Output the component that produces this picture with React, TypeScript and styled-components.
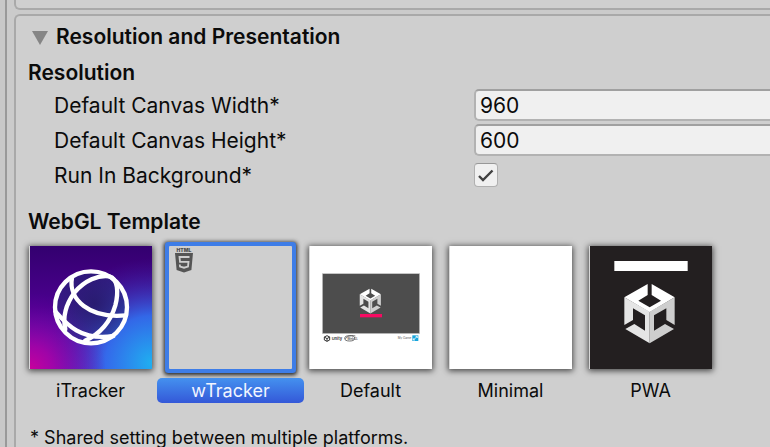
import React, { useState } from "react";
import styled, { createGlobalStyle } from "styled-components";

const GlobalStyle = createGlobalStyle`
  * { box-sizing: border-box; }
  body {
    margin: 0;
    background: #c8c8c8;
    color: #0b0b0b;
    font-family: Inter, "Liberation Sans", sans-serif;
    font-optical-sizing: none;
    overflow: hidden;
  }
  button, input { font: inherit; color: inherit; }
`;

const Window = styled.div`
  min-height: 100vh;
  padding-left: 5px;
  display: flex;
`;

const Inspector = styled.main`
  flex: 1;
  min-width: 0;
  display: flex;
  flex-direction: column;
  gap: 4px;
  padding-left: 7px;
  border-left: 2px solid #999999;
  background: #cbcbcb;
`;

const Panel = styled.section<{ $grow?: boolean }>`
  border: 2px solid #a9a9a9;
  border-right: 0;
  border-radius: 6px 0 0 6px;
  background: #cfcfcf;
  ${(p) =>
    p.$grow
      ? "flex: 1; padding-top: 6px; border-bottom: 0; border-bottom-left-radius: 0;"
      : "height: 10px; border-top: 0; border-top-left-radius: 0;"}
`;

const Foldout = styled.button`
  display: flex;
  align-items: center;
  gap: 7px;
  height: 30px;
  margin: 0 0 6px 15px;
  padding: 0;
  border: 0;
  background: none;
  font-size: 21px;
  font-weight: 600;
  line-height: 30px;
`;

const Arrow = styled.svg<{ $open: boolean }>`
  width: 18px;
  height: 16px;
  transform: ${(p) => (p.$open ? "none" : "rotate(-90deg)")};
`;

const Heading = styled.h2`
  margin: 0 0 0 12px;
  font-size: 21px;
  font-weight: 600;
  line-height: 30px;
`;

const Fields = styled.div`
  display: grid;
  gap: 3px;
  margin: 1px 0 16px 38px;
`;

const Field = styled.div`
  display: grid;
  grid-template-columns: 420px minmax(0, 1fr);
  align-items: center;
  height: 32px;
`;

const Label = styled.label`
  padding-top: 2px;
  font-size: 21px;
  line-height: 30px;
  white-space: nowrap;
`;

const NumberBox = styled.input`
  width: 100%;
  height: 32px;
  padding: 0 4px;
  border: 2px solid #b2b2b2;
  border-top-color: #a0a0a0;
  border-right: 0;
  border-radius: 5px 0 0 5px;
  background: #f0f0f0;
  font-size: 21px;
  outline: none;
`;

const CheckWrap = styled.span`
  display: grid;
  width: 24px;
  height: 24px;
  > * { grid-area: 1 / 1; }
`;

const CheckBox = styled.input`
  appearance: none;
  width: 24px;
  height: 24px;
  margin: 0;
  border: 1px solid #b0b0b0;
  border-top-color: #989898;
  border-radius: 4px;
  background: #f0f0f0;
  &:not(:checked) + svg { visibility: hidden; }
`;

const CheckMark = styled.svg`
  width: 24px;
  height: 24px;
  pointer-events: none;
`;

const Templates = styled.div`
  display: grid;
  grid-template-columns: repeat(auto-fill, 139px);
  column-gap: 1px;
  margin: 9px 0 26px 5px;
`;

const Template = styled.button`
  display: flex;
  flex-direction: column;
  align-items: center;
  gap: 9px;
  padding: 0;
  border: 0;
  background: none;
`;

const Thumb = styled.span<{ $selected: boolean }>`
  display: block;
  width: 123px;
  height: 123px;
  border-left: ${(p) => (p.$selected ? "0" : "1px solid #d8d8d8")};
  border-radius: ${(p) => (p.$selected ? "1px" : "0")};
  box-shadow: ${(p) =>
    p.$selected
      ? "0 0 0 4px #3e7de7, 0 1px 4px 5px rgba(0, 0, 0, 0.85)"
      : "0 1px 6px 1px rgba(0, 0, 0, 0.65)"};
  background: #cfcfcf;
  > svg { display: block; width: 100%; height: 100%; }
`;

const Name = styled.span<{ $selected: boolean }>`
  width: 147px;
  height: 25px;
  border-radius: 5px;
  font-size: 18px;
  line-height: 25px;
  text-align: center;
  color: ${(p) => (p.$selected ? "#f2f5ff" : "inherit")};
  background: ${(p) => (p.$selected ? "linear-gradient(#4491ef, #3458d8)" : "none")};
`;

const Note = styled.p`
  margin: 0 0 0 14px;
  font-size: 18px;
  line-height: 18px;
`;

function UnityCube() {
  return (
    <>
      <path fill="#fff" d="M173 114V147L145 164L179 184L213 164L185 147V114L254 154L179 199L103 154Z" />
      <path fill="#e5e5e5" d="M103 154L179 197V292L106 249L133 234L165 254V208L129 187V222L103 237Z" />
      <path fill="#cecece" d="M254 154L179 197V292L252 249L225 234L192 254V208L229 187V222L254 237Z" />
    </>
  );
}

function GlobeArt() {
  return (
    <svg viewBox="0 0 366 369" preserveAspectRatio="none" aria-hidden="true">
      <defs>
        <linearGradient id="night" x1="0" y1="0" x2="0" y2="1">
          <stop offset="0" stopColor="#33006f" />
          <stop offset="0.5" stopColor="#4c0090" />
          <stop offset="1" stopColor="#6a22cc" />
        </linearGradient>
        <radialGradient id="pink" cx="0" cy="1" r="0.62">
          <stop offset="0" stopColor="#c8009c" />
          <stop offset="0.3" stopColor="#aa00a4" stopOpacity="0.85" />
          <stop offset="1" stopColor="#6000a0" stopOpacity="0" />
        </radialGradient>
        <radialGradient id="cyan" cx="1" cy="0.95" r="0.85">
          <stop offset="0" stopColor="#1fb0f0" />
          <stop offset="0.45" stopColor="#3070ee" stopOpacity="0.92" />
          <stop offset="1" stopColor="#3a20a0" stopOpacity="0" />
        </radialGradient>
        <radialGradient id="shade" cx="0.55" cy="0.45" r="0.5">
          <stop offset="0" stopColor="#241c68" stopOpacity="0.85" />
          <stop offset="1" stopColor="#24307c" stopOpacity="0.5" />
        </radialGradient>
      </defs>
      <rect width="366" height="369" fill="url(#night)" />
      <rect width="366" height="369" fill="url(#cyan)" />
      <rect width="366" height="369" fill="url(#pink)" />
      <circle cx="183" cy="184" r="107" fill="url(#shade)" />
      <g fill="none" stroke="#fff" strokeWidth="13" strokeLinecap="round">
        <circle cx="183" cy="184" r="108" />
        <path d="M126 95C114 160 178 219 288 208" />
        <path d="M106 250C98 215 104 180 134 139C164 104 205 86 238 91C264 98 266 140 256 178C243 222 214 262 165 284" />
        <path d="M76 196C104 228 150 286 250 270" />
      </g>
    </svg>
  );
}

function Html5Art() {
  return (
    <svg viewBox="0 0 123 123" aria-hidden="true">
      <text x="15" y="6" textAnchor="middle" fontSize="5" fontWeight="900" fill="#505050">
        HTML
      </text>
      <path fill="#555" d="M6 7H24L22.400 24L15 26.500L7.600 24Z" />
      <path fill="none" stroke="#cfcfcf" strokeWidth="1.800" d="M20.500 11H10.500L11 15.800H19.500L19 20.500L15 21.700L11 20.500L10.800 18.500" />
    </svg>
  );
}

function PlayerArt() {
  return (
    <svg viewBox="0 0 366 369" preserveAspectRatio="none" aria-hidden="true">
      <rect width="366" height="369" fill="#fff" />
      <rect x="37" y="83" width="292" height="180" fill="#4d4d4d" stroke="#c8c8c8" strokeWidth="2" />
      <g transform="translate(106 80) scale(0.420)">
        <UnityCube />
      </g>
      <rect x="150" y="204" width="66" height="10" fill="#f70a62" />
      <path fill="none" stroke="#333" strokeWidth="3" d="M51 269L59 273V282L51 286L43 282V273ZM51 278V286M51 278L43 273M51 278L59 273" />
      <text x="65" y="282" fontSize="12" fontWeight="700" fill="#444">Unity</text>
      <g fill="none" stroke="#555" strokeWidth="2.500">
        <ellipse cx="119" cy="277" rx="15" ry="8" />
        <path d="M136 270C120 266 108 272 106 280" />
      </g>
      <text x="112" y="281" fontSize="9" fontWeight="600" fill="#555">WebGL</text>
      <text x="263" y="279" fontSize="9" fontWeight="500" fill="#777">My Game</text>
      <rect x="307" y="268" width="18" height="17" fill="#16a5dc" />
      <path fill="none" stroke="#fff" strokeWidth="2.500" d="M317 271H322V276M315 282H310V277M321 272L311 281" />
    </svg>
  );
}

function BlankArt() {
  return (
    <svg viewBox="0 0 122 123" preserveAspectRatio="none" aria-hidden="true">
      <rect width="122" height="123" fill="#fff" />
    </svg>
  );
}

function PwaArt() {
  return (
    <svg viewBox="0 0 366 369" preserveAspectRatio="none" aria-hidden="true">
      <rect width="366" height="369" fill="#231f20" />
      <rect x="73" y="45" width="220" height="30" fill="#fff" />
      <UnityCube />
    </svg>
  );
}

const templates = [
  { name: "iTracker", Art: GlobeArt },
  { name: "wTracker", Art: Html5Art },
  { name: "Default", Art: PlayerArt },
  { name: "Minimal", Art: BlankArt },
  { name: "PWA", Art: PwaArt },
];

export default function App() {
  const [open, setOpen] = useState(true);
  const [selected, setSelected] = useState("wTracker");

  return (
    <>
      <GlobalStyle />
      <Window>
        <Inspector>
          <Panel />
          <Panel $grow>
            <Foldout type="button" aria-expanded={open} onClick={() => setOpen(!open)}>
              <Arrow $open={open} viewBox="0 0 18 16" aria-hidden="true">
                <path d="M1 2H17L9 16Z" fill="#858585" />
              </Arrow>
              Resolution and Presentation
            </Foldout>
            {open && (
              <>
                <Heading>Resolution</Heading>
                <Fields>
                  <Field>
                    <Label htmlFor="canvas-width">Default Canvas Width*</Label>
                    <NumberBox id="canvas-width" inputMode="numeric" defaultValue="960" />
                  </Field>
                  <Field>
                    <Label htmlFor="canvas-height">Default Canvas Height*</Label>
                    <NumberBox id="canvas-height" inputMode="numeric" defaultValue="600" />
                  </Field>
                  <Field>
                    <Label htmlFor="run-background">Run In Background*</Label>
                    <CheckWrap>
                      <CheckBox id="run-background" type="checkbox" defaultChecked />
                      <CheckMark viewBox="0 0 24 24" aria-hidden="true">
                        <path d="M5 13L9 17L18.500 7.500" fill="none" stroke="#404040" strokeWidth="2.400" />
                      </CheckMark>
                    </CheckWrap>
                  </Field>
                </Fields>
                <Heading>WebGL Template</Heading>
                <Templates>
                  {templates.map(({ name, Art }) => (
                    <Template
                      key={name}
                      type="button"
                      aria-pressed={name === selected}
                      onClick={() => setSelected(name)}
                    >
                      <Thumb $selected={name === selected}>
                        <Art />
                      </Thumb>
                      <Name $selected={name === selected}>{name}</Name>
                    </Template>
                  ))}
                </Templates>
                <Note>* Shared setting between multiple platforms.</Note>
              </>
            )}
          </Panel>
        </Inspector>
      </Window>
    </>
  );
}
